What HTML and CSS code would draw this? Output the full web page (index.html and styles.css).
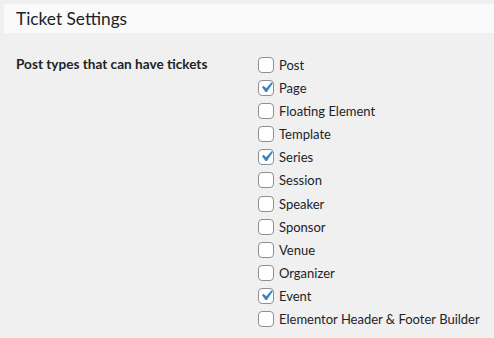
FILE: index.html
```html
<!DOCTYPE html>
<html>
<head>
<meta charset="utf-8">
<link rel="stylesheet" href="styles.css">
</head>
<body>
<div class="page">
  <div class="header"><h2 class="title">Ticket Settings</h2></div>
  <div class="row">
    <div class="label">Post types that can have tickets</div>
    <ul class="options">
      <li><span class="box"></span>Post</li>
      <li><span class="box checked"><svg viewBox="0 0 20 20"><path d="M14.83 4.89l1.34.94-5.81 8.38H9.02L5.78 9.67l1.34-1.25 2.57 2.4z"/></svg></span>Page</li>
      <li><span class="box"></span>Floating Element</li>
      <li><span class="box"></span>Template</li>
      <li><span class="box checked"><svg viewBox="0 0 20 20"><path d="M14.83 4.89l1.34.94-5.81 8.38H9.02L5.78 9.67l1.34-1.25 2.57 2.4z"/></svg></span>Series</li>
      <li><span class="box"></span>Session</li>
      <li><span class="box"></span>Speaker</li>
      <li><span class="box"></span>Sponsor</li>
      <li><span class="box"></span>Venue</li>
      <li><span class="box"></span>Organizer</li>
      <li><span class="box checked"><svg viewBox="0 0 20 20"><path d="M14.83 4.89l1.34.94-5.81 8.38H9.02L5.78 9.67l1.34-1.25 2.57 2.4z"/></svg></span>Event</li>
      <li><span class="box"></span>Elementor Header &amp; Footer Builder</li>
    </ul>
  </div>
</div>
</body>
</html>
```
FILE: styles.css
```css
html, body {
  margin: 0;
  padding: 0;
  background: #f0f0f1;
}
body {
  font-family: "Segoe UI", Lato, "Open Sans", sans-serif;
  color: #1d2327;
  font-size: 13px;
}
.page {
  padding: 4px 0 0 4px;
}
.header {
  background: #fafafa;
  height: 29px;
  display: flex;
  align-items: center;
  padding-left: 12px;
}
.title {
  margin: 0;
  font-size: 17.3px;
  font-weight: 400;
  color: #1d2327;
}
.row {
  display: flex;
  padding-top: 20.45px;
  padding-left: 12px;
}
.label {
  flex: none;
  width: 242px;
  font-size: 13.6px;
  font-weight: 700;
  line-height: 23px;
  color: #1d2327;
}
.options {
  list-style: none;
  margin: 0;
  padding: 0;
  white-space: nowrap;
}
.options li {
  height: 23.1px;
  display: flex;
  align-items: center;
}
.box {
  width: 16px;
  height: 16px;
  box-sizing: border-box;
  border: 1px solid #8c8f94;
  border-radius: 4px;
  background: #fff;
  margin-right: 5px;
  position: relative;
  flex: none;
}
.box svg {
  position: absolute;
  width: 21px;
  height: 21px;
  left: -3px;
  top: -4px;
  fill: #3582c4;
}
```
